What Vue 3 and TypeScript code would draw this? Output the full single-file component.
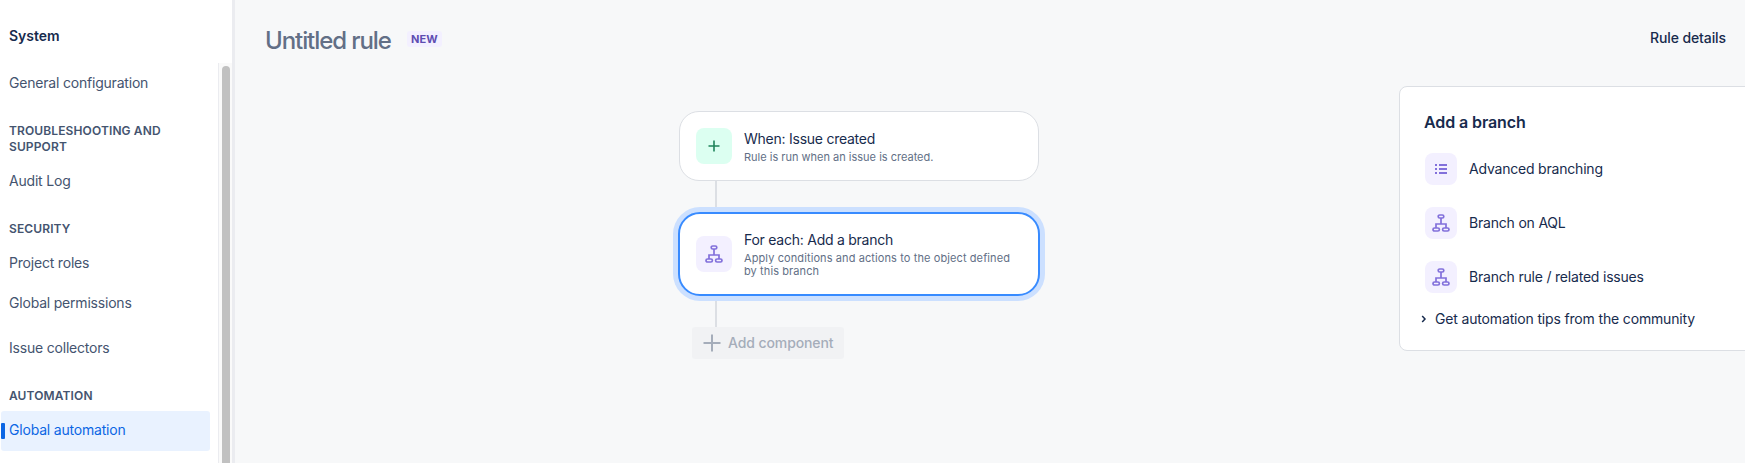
<script setup lang="ts">
interface PanelItem { label: string; icon: 'list' | 'tree' }
const panelItems: PanelItem[] = [
  { label: 'Advanced branching', icon: 'list' },
  { label: 'Branch on AQL', icon: 'tree' },
  { label: 'Branch rule / related issues', icon: 'tree' },
]
</script>

<template>
  <div class="page">
    <aside class="sidebar">
      <div class="side-head">System</div>
      <div class="side-body">
        <nav class="nav">
          <a class="item">General configuration</a>
          <h4 class="heading first">TROUBLESHOOTING AND SUPPORT</h4>
          <a class="item after-heading">Audit Log</a>
          <h4 class="heading first">SECURITY</h4>
          <a class="item after-heading">Project roles</a>
          <a class="item">Global permissions</a>
          <a class="item spaced">Issue collectors</a>
          <h4 class="heading">AUTOMATION</h4>
          <a class="item after-heading active"><span class="marker"></span>Global automation</a>
        </nav>
        <div class="track"><div class="thumb"></div></div>
      </div>
    </aside>

    <main class="main">
      <header class="top">
        <div class="title-wrap">
          <h1 class="title">Untitled rule</h1>
          <span class="badge">NEW</span>
        </div>
        <span class="details">Rule details</span>
      </header>

      <div class="content">
        <section class="flow">
          <div class="card">
            <span class="ico ico-green">
              <svg width="12" height="12" viewBox="0 0 12 12" fill="none" stroke="#1f845a" stroke-width="1.6">
                <path d="M6 .5v11M.5 6h11" />
              </svg>
            </span>
            <div class="card-text">
              <div class="card-title">When: Issue created</div>
              <div class="card-desc">Rule is run when an issue is created.</div>
            </div>
          </div>
          <div class="line"></div>
          <div class="card selected">
            <span class="ico ico-purple">
              <svg width="20" height="20" viewBox="0 0 20 20" fill="none" stroke="#8270db" stroke-width="1.7">
                <rect x="7.2" y="2" width="5.6" height="3" rx="1.5" />
                <rect x="2" y="15" width="6.4" height="3" rx="1.5" />
                <rect x="11.6" y="15" width="6.4" height="3" rx="1.5" />
                <path d="M10 5v6M5 15v-4h10v4" />
              </svg>
            </span>
            <div class="card-text">
              <div class="card-title">For each: Add a branch</div>
              <div class="card-desc wrap">Apply conditions and actions to the object defined by this branch</div>
            </div>
          </div>
          <div class="line"></div>
          <button class="add" type="button">
            <svg width="18" height="18" viewBox="0 0 18 18" fill="none" stroke="#a5adba" stroke-width="2">
              <path d="M9 .5v17M.5 9h17" />
            </svg>
            <span>Add component</span>
          </button>
        </section>

        <section class="panel">
          <h3 class="panel-title">Add a branch</h3>
          <ul class="panel-list">
            <li v-for="p in panelItems" :key="p.label" class="panel-item">
              <span class="ico-sm">
                <svg v-if="p.icon === 'list'" width="16" height="16" viewBox="0 0 16 16" fill="#8270db">
                  <rect x="2" y="3" width="2" height="2" />
                  <rect x="2" y="7" width="2" height="2" />
                  <rect x="2" y="11" width="2" height="2" />
                  <rect x="6" y="3" width="8" height="2" />
                  <rect x="6" y="7" width="8" height="2" />
                  <rect x="6" y="11" width="8" height="2" />
                </svg>
                <svg v-else width="20" height="20" viewBox="0 0 20 20" fill="none" stroke="#8270db" stroke-width="1.7">
                  <rect x="7.2" y="2" width="5.6" height="3" rx="1.5" />
                  <rect x="2" y="15" width="6.4" height="3" rx="1.5" />
                  <rect x="11.6" y="15" width="6.4" height="3" rx="1.5" />
                  <path d="M10 5v6M5 15v-4h10v4" />
                </svg>
              </span>
              <span class="panel-label">{{ p.label }}</span>
            </li>
          </ul>
          <div class="tips">
            <svg width="6" height="8" viewBox="0 0 6 8" fill="none" stroke="#172b4d" stroke-width="1.5">
              <path d="M1.2 1l2.8 3-2.8 3" />
            </svg>
            <span>Get automation tips from the community</span>
          </div>
        </section>
      </div>
    </main>
  </div>
</template>

<style>
html, body { margin: 0; background: #f7f8f9; }
</style>

<style scoped>
* { box-sizing: border-box; }
.page {
  width: 1745px; height: 463px; display: flex; overflow: hidden;
  font-family: Inter, "Liberation Sans", sans-serif; background: #f7f8f9; color: #172b4d;
}
.sidebar {
  width: 235px; flex: none; background: #fff; border-right: 3px solid #ebecf0;
  display: flex; flex-direction: column;
}
.side-head { height: 63px; padding: 26px 0 0 9px; font-size: 14px; line-height: 20px; font-weight: 600; color: #172b4d; }
.side-body { flex: 1; display: flex; min-height: 0; }
.nav { width: 218px; padding-left: 1px; flex: none; }
.item {
  display: block; width: 209px; height: 40px; padding: 10px 8px; font-size: 14px; line-height: 20px;
  letter-spacing: -.2px; color: #44546f; position: relative;
}
.heading {
  margin: 19px 0 0; padding: 0 8px; font-size: 12px; line-height: 16px; font-weight: 600;
  letter-spacing: .01em; color: #44546f;
}
.heading.first { margin-top: 20px; }
.after-heading { margin-top: 6px; }
.heading:not(.first) + .after-heading { margin-top: 7px; }
.spaced { margin-top: 6px; padding-top: 9px; padding-bottom: 11px; }
.active { background: #e9f2ff; color: #0c66e4; border-radius: 3px; padding-top: 9px; padding-bottom: 11px; }
.marker { position: absolute; left: 0; top: 12px; width: 4px; height: 16px; background: #0c66e4; border-radius: 1px; }
.track { width: 14px; flex: none; border-left: 1px solid #ebecf0; padding: 3px 2px 0 3px; background: #fafafa; }
.thumb { height: 100%; background: #c1c1c1; border-radius: 4px 4px 0 0; }

.main { flex: 1; min-width: 0; display: flex; flex-direction: column; }
.top { height: 86px; display: flex; justify-content: space-between; padding: 0 19px 0 30px; }
.title-wrap { display: flex; align-items: flex-start; gap: 18px; }
.title { margin: 25px 0 0; font-size: 24px; line-height: 32px; font-weight: 500; letter-spacing: -1.08px; color: #626f86; }
.badge {
  margin-top: 31px; width: 35px; height: 16px; margin-left: -2px; border-radius: 3px; background: #f3f0ff; color: #5e4db2;
  font-size: 11px; line-height: 16px; font-weight: 700; text-align: center;
}
.details { margin-top: 28px; font-size: 14px; line-height: 20px; font-weight: 500; letter-spacing: -.1px; color: #172b4d; }

.content { display: flex; padding-left: 444px; }
.flow { width: 360px; flex: none; padding-top: 25px; display: flex; flex-direction: column; align-items: flex-start; }
.card {
  width: 360px; height: 70px; display: flex; align-items: center; gap: 12px; padding: 0 16px;
  background: #fff; border: 1px solid #dcdfe4; border-radius: 20px;
}
.selected {
  width: 362px; height: 84px; margin: 5px 0 5px -1px; padding: 0 16px; border: 2px solid #388bff;
  box-shadow: 0 0 0 5px #cce0ff; border-radius: 22px;
}
.ico { width: 36px; height: 36px; border-radius: 8px; flex: none; display: flex; align-items: center; justify-content: center; }
.ico-green { background: #dcfff1; }
.ico-purple { background: #f3f0ff; }
.card-title { font-size: 14px; line-height: 20px; letter-spacing: -.25px; color: #172b4d; }
.card-desc { margin-top: 2px; font-size: 11px; line-height: 13px; color: #626f86; }
.card-desc.wrap { max-width: 270px; letter-spacing: .1px; }
.card-text { min-width: 0; }
.line { width: 2px; height: 26px; margin-left: 36px; background: #dcdfe4; flex: none; }
.add {
  margin: 0 0 0 13px; width: 152px; height: 32px; padding: 0 0 2px 11px; border: 0; border-radius: 3px;
  background: #f1f2f4; display: flex; align-items: center; gap: 7px;
  font-family: inherit; font-size: 14px; font-weight: 500; letter-spacing: -.1px; color: #a5adba;
}
.add svg { margin-top: 2px; }

.panel {
  margin-left: 360px; width: 420px; height: 265px; flex: none; background: #fff; border: 1px solid #dcdfe4;
  border-radius: 8px; padding: 24px 0 0 24px;
}
.panel-title { margin: 0; font-size: 16px; line-height: 22px; font-weight: 600; letter-spacing: -.1px; color: #172b4d; }
.panel-list { list-style: none; margin: 20px 0 0 1px; padding: 0; display: flex; flex-direction: column; gap: 22px; }
.panel-item { display: flex; align-items: center; gap: 12px; height: 32px; }
.ico-sm { width: 32px; height: 32px; border-radius: 8px; background: #f3f0ff; display: flex; align-items: center; justify-content: center; flex: none; }
.panel-label { font-size: 14px; line-height: 20px; letter-spacing: -.2px; color: #172b4d; }
.tips { margin: 16px 0 0 -3px; display: flex; align-items: center; gap: 8px; font-size: 14px; line-height: 20px; letter-spacing: -.16px; color: #172b4d; }
</style>
